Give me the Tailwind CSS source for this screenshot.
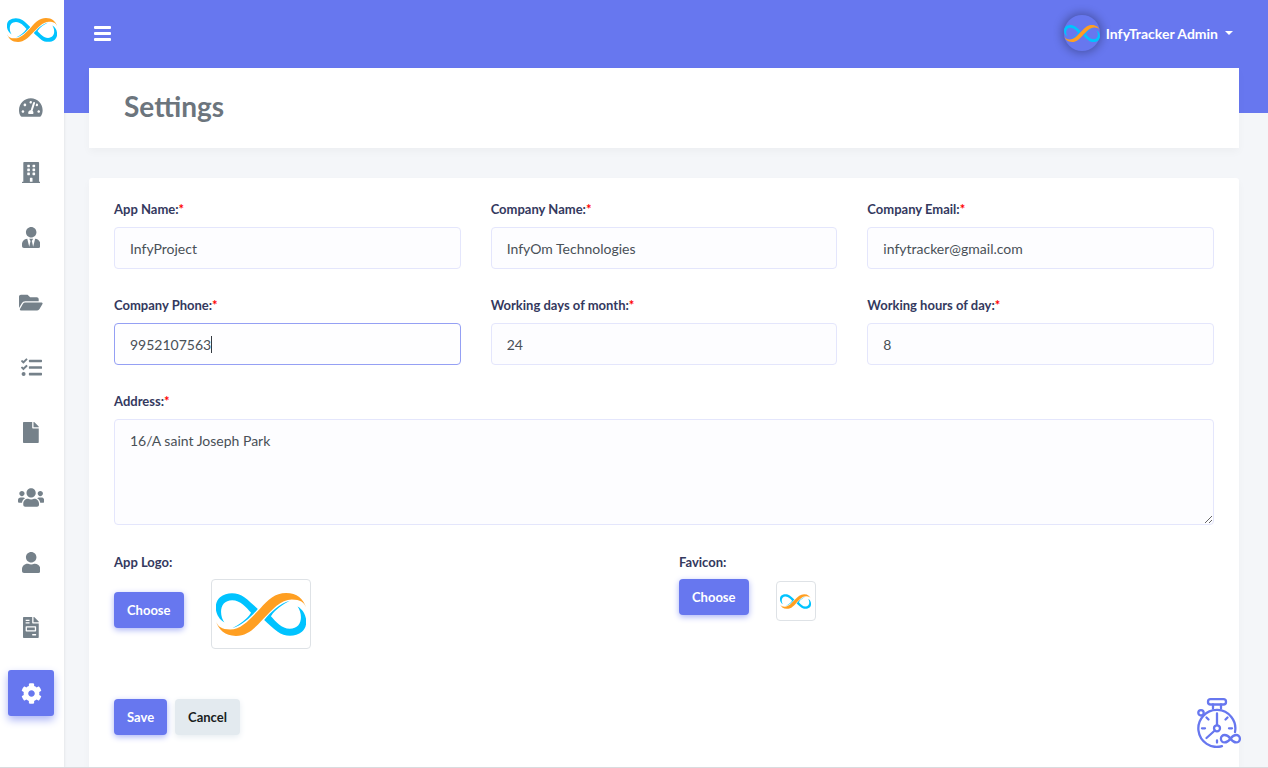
<!DOCTYPE html>
<html lang="en">
<head>
<meta charset="utf-8">
<meta name="viewport" content="width=device-width, initial-scale=1">
<title>Settings</title>
<script src="https://cdn.jsdelivr.net/npm/@tailwindcss/browser@4"></script>
</head>
<body class="flex min-h-screen border-b border-[#d9dbde] bg-[#f4f6f9] font-['Lato',sans-serif] text-[#6c757d]">

<svg class="hidden" aria-hidden="true">
  <symbol id="logo" viewBox="0 0 267 127">
    <g fill="#00c3ff">
      <path id="loop" d="M25 87C-5 70-8 28 12 12C32-4 64-3 84 12C98 22 112 36 124 47C105 70 78 96 48 104C70 92 90 80 104 58C90 42 72 21 48 21C26 21 15 36 15 55C15 68 19 78 25 87Z"/>
      <use href="#loop" transform="rotate(180 133.5 63.5)"/>
    </g>
    <path fill="#ff9f22" d="M0 83C5 100 17 108 42 108C75 108 100 78 130 47C155 20 175 0 208 0C240 0 260 18 267 43C262 27 250 19 225 19C192 19 167 49 137 80C112 107 92 127 59 127C27 127 7 109 0 83Z"/>
  </symbol>
</svg>

<aside class="w-16 shrink-0 bg-white pl-[7px] shadow-sm">
  <a href="#" aria-label="Home" class="flex h-[60px] w-[50px] items-center"><svg class="h-6 w-[50px]"><use href="#logo"/></svg></a>
  <nav class="ml-px mt-[25px] flex w-[46px] flex-col gap-5 pb-6 text-[#75818a]">
    <a href="#" aria-label="Dashboard" class="flex h-[45px] items-center justify-center"><svg class="h-[21px]" viewBox="0 0 576 512" fill="currentColor"><path d="M288 32C128.900 32 0 160.900 0 320c0 52.800 14.300 102.300 39 144.800 5.600 9.600 16.300 15.200 27.400 15.200h443.200c11.100 0 21.800-5.600 27.400-15.200 24.700-42.500 39-92 39-144.800 0-159.100-128.900-288-288-288zm0 64c14.700 0 26.600 10.100 30.300 23.700-1.100 2.300-2.600 4.200-3.500 6.700l-9.200 27.700c-5.100 3.500-11 6-17.600 6-17.700 0-32-14.300-32-32S270.300 96 288 96zM96 384c-17.700 0-32-14.300-32-32s14.300-32 32-32 32 14.300 32 32-14.300 32-32 32zm48-160c-17.700 0-32-14.300-32-32s14.300-32 32-32 32 14.300 32 32-14.300 32-32 32zm246.800-72.400l-61.300 184c13.500 11.600 22.500 28.600 22.500 48.400 0 11.700-3.400 22.600-8.900 32H232.900c-5.500-9.500-8.900-20.300-8.900-32 0-33.900 26.500-61.400 59.900-63.600l61.300-184c4.200-12.500 17.700-19.400 30.400-15.200 12.600 4.200 19.400 17.800 15.200 30.400zm14.700 57.200l15.500-46.600c3.500-1.300 7.100-2.200 11.100-2.200 17.700 0 32 14.300 32 32s-14.300 32-32 32c-11.400 0-20.900-6.200-26.600-15.200zM480 384c-17.700 0-32-14.300-32-32s14.300-32 32-32 32 14.300 32 32-14.300 32-32 32z"/></svg></a>
    <a href="#" aria-label="Departments" class="flex h-[45px] items-center justify-center"><svg class="h-[21px]" viewBox="0 0 448 512" fill="currentColor"><path d="M436 480h-20V24c0-13.255-10.745-24-24-24H56C42.745 0 32 10.745 32 24v456H12c-6.627 0-12 5.373-12 12v20h448v-20c0-6.627-5.373-12-12-12zM128 76c0-6.627 5.373-12 12-12h40c6.627 0 12 5.373 12 12v40c0 6.627-5.373 12-12 12h-40c-6.627 0-12-5.373-12-12V76zm0 96c0-6.627 5.373-12 12-12h40c6.627 0 12 5.373 12 12v40c0 6.627-5.373 12-12 12h-40c-6.627 0-12-5.373-12-12v-40zm52 148h-40c-6.627 0-12-5.373-12-12v-40c0-6.627 5.373-12 12-12h40c6.627 0 12 5.373 12 12v40c0 6.627-5.373 12-12 12zm76 160h-64v-84c0-6.627 5.373-12 12-12h40c6.627 0 12 5.373 12 12v84zm64-172c0 6.627-5.373 12-12 12h-40c-6.627 0-12-5.373-12-12v-40c0-6.627 5.373-12 12-12h40c6.627 0 12 5.373 12 12v40zm0-96c0 6.627-5.373 12-12 12h-40c-6.627 0-12-5.373-12-12v-40c0-6.627 5.373-12 12-12h40c6.627 0 12 5.373 12 12v40zm0-96c0 6.627-5.373 12-12 12h-40c-6.627 0-12-5.373-12-12V76c0-6.627 5.373-12 12-12h40c6.627 0 12 5.373 12 12v40z"/></svg></a>
    <a href="#" aria-label="Clients" class="flex h-[45px] items-center justify-center"><svg class="h-[21px]" viewBox="0 0 448 512" fill="currentColor"><path d="M224 256c70.700 0 128-57.300 128-128S294.700 0 224 0 96 57.300 96 128s57.300 128 128 128zm95.800 32.600L272 480l-32-136 32-56h-96l32 56-32 136-47.800-191.400C56.900 292 0 350.300 0 422.400V464c0 26.500 21.500 48 48 48h352c26.500 0 48-21.500 48-48v-41.600c0-72.100-56.900-130.400-128.200-133.800z"/></svg></a>
    <a href="#" aria-label="Projects" class="flex h-[45px] items-center justify-center"><svg class="h-[21px]" viewBox="0 0 576 512" fill="currentColor"><path d="M572.694 292.093L500.270 416.248A63.997 63.997 0 0 1 444.989 448H45.025c-18.523 0-30.064-20.093-20.731-36.093l72.424-124.155A64 64 0 0 1 152 256h399.964c18.523 0 30.064 20.093 20.730 36.093zM152 224h328v-48c0-26.510-21.490-48-48-48H272l-64-64H48C21.490 64 0 85.490 0 112v278.046l69.077-118.418C86.214 242.250 117.989 224 152 224z"/></svg></a>
    <a href="#" aria-label="Tasks" class="flex h-[45px] items-center justify-center"><svg class="h-[21px]" viewBox="0 0 512 512" fill="currentColor"><path d="M139.610 35.500a12 12 0 0 0-17 0L58.930 98.810l-22.700-22.120a12 12 0 0 0-17 0L3.530 92.410a12 12 0 0 0 0 17l47.590 47.400a12.780 12.780 0 0 0 17.610 0l15.590-15.620L156.520 69a12.090 12.090 0 0 0 .09-17zm0 159.190a12 12 0 0 0-17 0l-63.680 63.720-22.700-22.100a12 12 0 0 0-17 0L3.530 252a12 12 0 0 0 0 17L51 316.500a12.770 12.770 0 0 0 17.600 0l15.700-15.690 72.200-72.220a12 12 0 0 0 .09-16.900zM64 368c-26.490 0-48.590 21.500-48.590 48S37.530 464 64 464a48 48 0 0 0 0-96zm432 16H208a16 16 0 0 0-16 16v32a16 16 0 0 0 16 16h288a16 16 0 0 0 16-16v-32a16 16 0 0 0-16-16zm0-320H208a16 16 0 0 0-16 16v32a16 16 0 0 0 16 16h288a16 16 0 0 0 16-16V80a16 16 0 0 0-16-16zm0 160H208a16 16 0 0 0-16 16v32a16 16 0 0 0 16 16h288a16 16 0 0 0 16-16v-32a16 16 0 0 0-16-16z"/></svg></a>
    <a href="#" aria-label="Reports" class="flex h-[45px] items-center justify-center"><svg class="h-[21px]" viewBox="0 0 384 512" fill="currentColor"><path d="M224 136V0H24C10.700 0 0 10.700 0 24v464c0 13.300 10.700 24 24 24h336c13.300 0 24-10.700 24-24V160H248c-13.200 0-24-10.800-24-24zm160-14.100v6.100H256V0h6.100c6.400 0 12.500 2.500 17 7l97.900 98c4.500 4.500 7 10.600 7 16.900z"/></svg></a>
    <a href="#" aria-label="Users" class="flex h-[45px] items-center justify-center"><svg class="h-[21px]" viewBox="0 0 640 512" fill="currentColor"><path d="M96 224c35.300 0 64-28.700 64-64s-28.700-64-64-64-64 28.700-64 64 28.700 64 64 64zm448 0c35.300 0 64-28.700 64-64s-28.700-64-64-64-64 28.700-64 64 28.700 64 64 64zm32 32h-64c-17.600 0-33.500 7.100-45.100 18.600 40.300 22.100 68.900 62 75.100 109.400h66c17.700 0 32-14.300 32-32v-32c0-35.300-28.700-64-64-64zm-256 0c61.900 0 112-50.100 112-112S381.900 32 320 32 208 82.100 208 144s50.100 112 112 112zm76.800 32h-8.300c-20.800 10-43.900 16-68.500 16s-47.600-6-68.500-16h-8.300C179.600 288 128 339.600 128 403.200V432c0 26.500 21.500 48 48 48h288c26.500 0 48-21.500 48-48v-28.800c0-63.600-51.600-115.200-115.200-115.200zm-223.700-13.400C161.500 263.100 145.600 256 128 256H64c-35.300 0-64 28.700-64 64v32c0 17.700 14.300 32 32 32h65.900c6.300-47.400 34.900-87.300 75.200-109.400z"/></svg></a>
    <a href="#" aria-label="Roles" class="flex h-[45px] items-center justify-center"><svg class="h-[21px]" viewBox="0 0 448 512" fill="currentColor"><path d="M224 256c70.700 0 128-57.300 128-128S294.700 0 224 0 96 57.300 96 128s57.300 128 128 128zm89.600 32h-16.700c-22.200 10.200-46.900 16-72.900 16s-50.600-5.800-72.900-16h-16.700C60.200 288 0 348.200 0 422.400V464c0 26.500 21.500 48 48 48h352c26.500 0 48-21.500 48-48v-41.600c0-74.200-60.200-134.400-134.400-134.400z"/></svg></a>
    <a href="#" aria-label="Invoices" class="flex h-[45px] items-center justify-center"><svg class="h-[21px]" viewBox="0 0 384 512" fill="currentColor"><path d="M288 256H96v64h192v-64zm89-151L279.100 7c-4.500-4.500-10.600-7-17-7H256v128h128v-6.100c0-6.300-2.500-12.400-7-16.900zm-153 31V0H24C10.700 0 0 10.700 0 24v464c0 13.300 10.700 24 24 24h336c13.300 0 24-10.700 24-24V160H248c-13.200 0-24-10.800-24-24zM64 72c0-4.420 3.580-8 8-8h80c4.420 0 8 3.580 8 8v16c0 4.420-3.580 8-8 8H72c-4.420 0-8-3.580-8-8V72zm0 64c0-4.420 3.580-8 8-8h80c4.420 0 8 3.580 8 8v16c0 4.420-3.580 8-8 8H72c-4.420 0-8-3.580-8-8v-16zm256 304c0 4.420-3.580 8-8 8h-80c-4.420 0-8-3.580-8-8v-16c0-4.420 3.580-8 8-8h80c4.420 0 8 3.580 8 8v16zm0-200v96c0 8.840-7.160 16-16 16H80c-8.840 0-16-7.160-16-16v-96c0-8.840 7.160-16 16-16h224c8.840 0 16 7.160 16 16z"/></svg></a>
    <a href="#" aria-label="Settings" aria-current="page" class="flex h-[46px] items-center justify-center rounded-[3px] bg-[#6777ef] text-white shadow-[0_4px_8px_#acb5f6]"><svg class="h-[21px]" viewBox="0 0 512 512" fill="currentColor"><path d="M487.400 315.700l-42.600-24.600c4.300-23.200 4.300-47 0-70.200l42.600-24.600c4.900-2.800 7.100-8.600 5.500-14-11.100-35.600-30-67.800-54.700-94.600-3.800-4.100-10-5.100-14.800-2.300L380.800 110c-17.900-15.400-38.500-27.300-60.800-35.100V25.800c0-5.600-3.900-10.500-9.400-11.700-36.700-8.200-74.300-7.800-109.200 0-5.500 1.200-9.400 6.100-9.400 11.700V75c-22.200 7.900-42.800 19.800-60.800 35.100L88.700 85.500c-4.900-2.800-11-1.900-14.800 2.300-24.700 26.700-43.600 58.900-54.700 94.600-1.700 5.400.6 11.200 5.500 14L67.300 221c-4.300 23.200-4.300 47 0 70.200l-42.600 24.600c-4.900 2.800-7.100 8.600-5.500 14 11.100 35.600 30 67.800 54.700 94.600 3.800 4.100 10 5.100 14.800 2.300l42.600-24.600c17.900 15.400 38.500 27.300 60.800 35.100v49.200c0 5.600 3.900 10.500 9.400 11.700 36.700 8.200 74.300 7.800 109.200 0 5.500-1.200 9.400-6.100 9.400-11.700v-49.200c22.200-7.900 42.800-19.800 60.800-35.100l42.600 24.600c4.900 2.800 11 1.900 14.800-2.300 24.700-26.700 43.600-58.900 54.700-94.600 1.500-5.500-.7-11.300-5.600-14.100zM256 336c-44.100 0-80-35.900-80-80s35.900-80 80-80 80 35.900 80 80-35.900 80-80 80z"/></svg></a>
  </nav>
</aside>

<div class="flex min-w-0 flex-1 flex-col">
  <header class="h-[113px] bg-[#6777ef]">
    <div class="flex h-[66px] items-center justify-between pl-[30px] pr-[35px]">
      <button type="button" aria-label="Toggle menu" class="text-white"><svg class="h-5 w-[17px]" viewBox="0 0 17 20" fill="currentColor"><rect y="3" width="17" height="3" rx="1"/><rect y="9" width="17" height="3" rx="1"/><rect y="15" width="17" height="3" rx="1"/></svg></button>
      <button type="button" class="flex items-center text-[14px] font-bold text-white">
        <span class="mr-1.5 flex size-9 items-center justify-center rounded-full shadow-[0_0_10px_2px_rgba(0,0,0,0.3)]"><svg class="h-[17px] w-9"><use href="#logo"/></svg></span>
        InfyTracker Admin
        <svg class="ml-[7px] h-1 w-2" viewBox="0 0 8 4" fill="currentColor"><path d="M0 0h8L4 4z"/></svg>
      </button>
    </div>
  </header>

  <main class="-mt-[45px] flex flex-1 flex-col gap-[30px] pl-[25px] pr-[29px]">
    <div class="bg-white px-[35px] pb-[22px] pt-[18px] shadow-[0_4px_8px_rgba(0,0,0,0.03)]">
      <h1 class="text-[28px] font-bold leading-[40px]">Settings</h1>
    </div>

    <form class="flex-1 rounded-t-[3px] bg-white px-[25px] pb-[30px] pt-[21px] text-[13px] font-bold leading-5 text-[#34395e] shadow-[0_4px_8px_rgba(0,0,0,0.03)]">
      <div class="grid grid-cols-3 gap-x-[30px] gap-y-[26px]">
        <div>
          <label for="app" class="mb-2 block">App Name:<span class="text-[#ff0000]">*</span></label>
          <input id="app" type="text" value="InfyProject" class="block h-[42px] w-full rounded-[4px] border border-[#e4e6fc] bg-[#fdfdff] px-[15px] text-[14px] font-normal text-[#495057] outline-none focus:border-[#95a0f4]">
        </div>
        <div>
          <label for="company" class="mb-2 block">Company Name:<span class="text-[#ff0000]">*</span></label>
          <input id="company" type="text" value="InfyOm Technologies" class="block h-[42px] w-full rounded-[4px] border border-[#e4e6fc] bg-[#fdfdff] px-[15px] text-[14px] font-normal text-[#495057] outline-none focus:border-[#95a0f4]">
        </div>
        <div>
          <label for="email" class="mb-2 block">Company Email:<span class="text-[#ff0000]">*</span></label>
          <input id="email" type="email" value="infytracker@gmail.com" class="block h-[42px] w-full rounded-[4px] border border-[#e4e6fc] bg-[#fdfdff] px-[15px] text-[14px] font-normal text-[#495057] outline-none focus:border-[#95a0f4]">
        </div>
        <div>
          <label for="phone" class="mb-2 block">Company Phone:<span class="text-[#ff0000]">*</span></label>
          <div class="relative">
            <input id="phone" type="tel" value="9952107563" class="block h-[42px] w-full rounded-[4px] border border-[#95a0f4] bg-[#fefeff] px-[15px] text-[14px] font-normal text-[#495057] caret-transparent outline-none">
            <span class="pointer-events-none absolute left-[97px] top-[13px] h-[17px] w-px bg-[#343a40]"></span>
          </div>
        </div>
        <div>
          <label for="days" class="mb-2 block">Working days of month:<span class="text-[#ff0000]">*</span></label>
          <input id="days" type="text" inputmode="numeric" value="24" class="block h-[42px] w-full rounded-[4px] border border-[#e4e6fc] bg-[#fdfdff] px-[15px] text-[14px] font-normal text-[#495057] outline-none focus:border-[#95a0f4]">
        </div>
        <div>
          <label for="hours" class="mb-2 block">Working hours of day:<span class="text-[#ff0000]">*</span></label>
          <input id="hours" type="text" inputmode="numeric" value="8" class="block h-[42px] w-full rounded-[4px] border border-[#e4e6fc] bg-[#fdfdff] px-[15px] text-[14px] font-normal text-[#495057] outline-none focus:border-[#95a0f4]">
        </div>
        <div class="col-span-3">
          <label for="address" class="mb-2 block">Address:<span class="text-[#ff0000]">*</span></label>
          <textarea id="address" class="block h-[106px] w-full resize-y rounded-[4px] border border-[#e4e6fc] bg-[#fdfdff] px-[15px] py-[9px] text-[14px] font-normal leading-6 text-[#495057] outline-none focus:border-[#95a0f4]">16/A saint Joseph Park</textarea>
        </div>
      </div>

      <div class="mt-[27px] grid grid-cols-2 gap-[30px]">
        <div>
          <p class="mb-[7px]">App Logo:</p>
          <div class="flex items-center gap-[27px]">
            <button type="button" aria-label="Choose app logo" class="mb-2 h-9 rounded-[4px] bg-[#6777ef] px-[13px] font-bold text-white shadow-[0_2px_6px_#acb5f6]">Choose</button>
            <div class="flex h-[70px] w-[100px] items-center justify-center rounded-[4px] border border-[#dee2e6]"><svg class="h-[43px] w-[90px]"><use href="#logo"/></svg></div>
          </div>
        </div>
        <div>
          <p class="mb-[7px]">Favicon:</p>
          <div class="flex items-start gap-[27px]">
            <button type="button" aria-label="Choose favicon" class="h-9 rounded-[4px] bg-[#6777ef] px-[13px] font-bold text-white shadow-[0_2px_6px_#acb5f6]">Choose</button>
            <div class="mt-0.5 flex size-10 items-center justify-center rounded-[4px] border border-[#dee2e6]"><svg class="h-[15px] w-[31px]"><use href="#logo"/></svg></div>
          </div>
        </div>
      </div>

      <div class="mt-[50px] flex gap-2">
        <button type="submit" class="h-9 rounded-[4px] bg-[#6777ef] px-[13px] font-bold text-white shadow-[0_2px_6px_#acb5f6]">Save</button>
        <button type="reset" class="h-9 rounded-[4px] bg-[#e3eaef] px-[13px] font-bold text-[#191d21] shadow-[0_2px_6px_#e6ecf1]">Cancel</button>
      </div>
    </form>
  </main>
</div>

<button type="button" aria-label="Start timer" class="fixed bottom-5 right-[27px] text-[#6777ef]">
  <svg class="h-[50px] w-11" viewBox="0 0 44 50" fill="none" stroke="currentColor" stroke-width="2.300" stroke-linecap="round">
    <rect x="11" y="1.200" width="18" height="5.300" rx="2.600"/>
    <path d="M16 6.500v4M24 6.500v4"/>
    <circle cx="4" cy="14.800" r="2.700"/>
    <path d="M25 48.200A18.500 18.500 0 1 1 38 34"/>
    <circle cx="20" cy="30.300" r="3"/>
    <path d="M20 27V15.500M17.800 32.500L9.500 40M5 30.300h3M32 30.300h3M9.500 19.500l2 2M30.500 19.500l-2 2M20 42.500v2"/>
    <path d="M33.500 40.700C31.500 38 29.700 37 27.600 37a3.700 3.700 0 0 0 0 7.400C29.700 44.400 31.500 43.400 33.500 40.700C35.500 38 37.300 37 39.200 37a3.700 3.700 0 0 1 0 7.400C37.300 44.400 35.500 43.400 33.500 40.700Z"/>
  </svg>
</button>

</body>
</html>
